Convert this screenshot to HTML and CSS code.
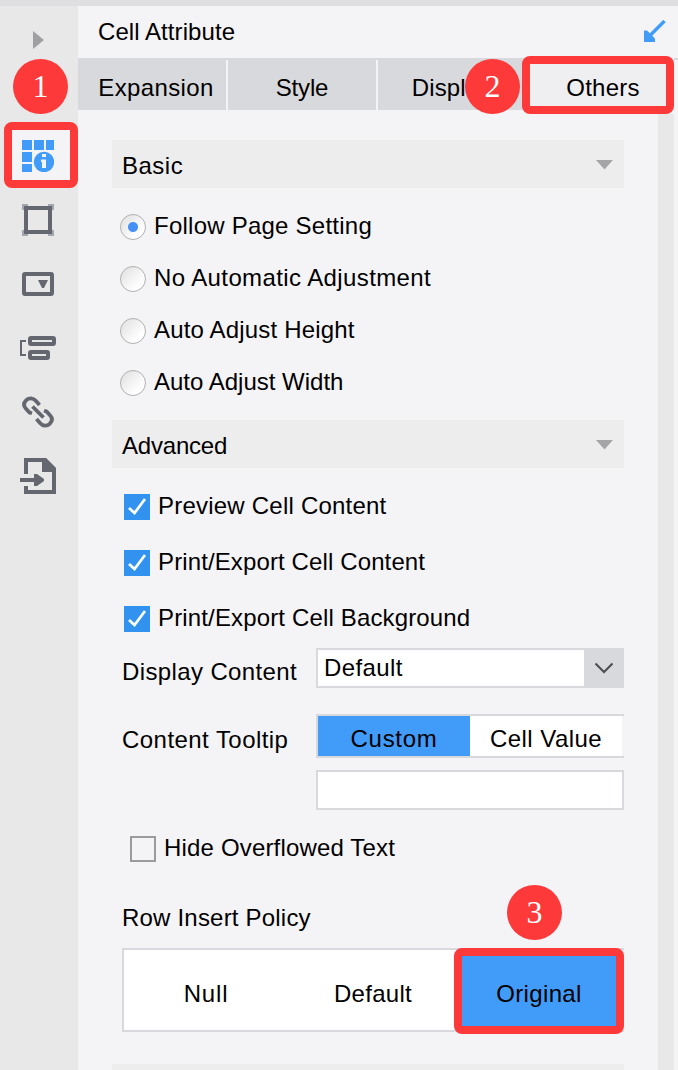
FILE: index.html
```html
<!DOCTYPE html>
<html lang="en">
<head>
<meta charset="utf-8">
<title>Cell Attribute</title>
<link rel="stylesheet" href="styles.css">
</head>
<body>
<div class="app">
  <nav class="rail">
    <svg class="collapse" width="12" height="18" viewBox="0 0 12 18"><path d="M0 0L11 9L0 18Z" fill="#a0a0a2"/></svg>
    <div class="tool tool-active">
      <svg width="32" height="32" viewBox="0 0 32 32" fill="#419bf9"><path d="M0 0h10v10H0zM12 0h10v10H12zM24 0h8v10h-8zM0 12h10v10H0zM0 24h10v8H0z"/><circle cx="22" cy="22" r="10.2"/><path d="M20 14h4v3h-4zM19 19.500H24V28h-4v-6h-1z" fill="#f4f4f7"/></svg>
      <span class="mark mark-tool"></span>
    </div>
    <div class="tool"><svg width="36" height="36" viewBox="0 0 36 36"><path d="M2 2h6v6H2zM28 2h6v6h-6zM2 28h6v6H2zM28 28h6v6h-6z" fill="#a5a6ab"/><path d="M6 6H30V30H6Z" fill="none" stroke="#646670" stroke-width="4"/><path d="M8 8h20v20H8z" fill="#e8e8e8"/></svg></div>
    <div class="tool"><svg width="36" height="36" viewBox="0 0 36 36"><rect x="4" y="8" width="28" height="20" rx="1" fill="none" stroke="#646670" stroke-width="4"/><path d="M18 14h10l-4 8h-2z" fill="#646670"/></svg></div>
    <div class="tool"><svg width="36" height="36" viewBox="0 0 36 36" fill="none" stroke="#646670"><path d="M6 11H1V25H6" stroke-width="2"/><rect x="10" y="8" width="24" height="6" rx="1" stroke-width="4"/><rect x="10" y="22" width="18" height="6" rx="1" stroke-width="4"/></svg></div>
    <div class="tool"><svg width="36" height="36" viewBox="0 0 36 36" fill="none" stroke="#646670" stroke-width="3.800"><path d="M19.500 11L16 7C13 3.600 9 3.600 6.300 6.200S3.400 12 6 14.800L9.500 18.500L12 19.300"/><path d="M16.500 25L20 29C23 32.400 27 32.400 29.700 29.800S32.600 24 30 21.200L26.500 17.500L24 16.700"/><path d="M12.500 12.500L23.500 23.500"/></svg></div>
    <div class="tool"><svg width="36" height="36" viewBox="0 0 36 36"><path d="M6 16V2H25L34 11V34H6V28" fill="none" stroke="#646670" stroke-width="4"/><path d="M22 0h4l10 10v4H22zM0 20h14v-4h3l7 5v2l-7 5h-3v-4H0z" fill="#646670"/></svg></div>
    <span class="badge badge-one">1</span>
  </nav>
  <main class="panel">
    <header class="title"><span class="t-title">Cell Attribute</span>
      <svg width="22" height="22" viewBox="0 0 22 22"><path d="M20.500 1L4 17.500" stroke="#419bf9" stroke-width="3.400"/><path d="M0 10.500l3 0 8 8v3.500H0z" fill="#419bf9"/></svg>
    </header>
    <div class="tabs">
      <div class="tab"><span class="t-expansion">Expansion</span></div>
      <div class="tab"><span class="t-style">Style</span></div>
      <div class="tab"><span class="t-display">Display</span><span class="badge badge-two">2</span></div>
      <div class="tab tab-active"><span class="t-others">Others</span><span class="mark mark-tab"></span></div>
    </div>
    <div class="body">
      <div class="form">
        <div class="section"><span class="t-basic">Basic</span><svg width="18" height="10" viewBox="0 0 18 10"><path d="M0 0H17L8.500 9.500Z" fill="#a5a5a7"/></svg></div>
        <div class="radios">
          <div class="radio"><i class="dot dot-on"></i><span class="t-follow">Follow Page Setting</span></div>
          <div class="radio"><i class="dot"></i><span class="t-noauto">No Automatic Adjustment</span></div>
          <div class="radio"><i class="dot"></i><span class="t-height">Auto Adjust Height</span></div>
          <div class="radio"><i class="dot"></i><span class="t-width">Auto Adjust Width</span></div>
        </div>
        <div class="section"><span class="t-advanced">Advanced</span><svg width="18" height="10" viewBox="0 0 18 10"><path d="M0 0H17L8.500 9.500Z" fill="#a5a5a7"/></svg></div>
        <div class="checks">
          <div class="check"><svg class="box" width="26" height="26" viewBox="0 0 26 26"><path d="M5 14l5.500 5L21 5" fill="none" stroke="#fff" stroke-width="2.700"/></svg><span class="t-preview">Preview Cell Content</span></div>
          <div class="check"><svg class="box" width="26" height="26" viewBox="0 0 26 26"><path d="M5 14l5.500 5L21 5" fill="none" stroke="#fff" stroke-width="2.700"/></svg><span class="t-print">Print/Export Cell Content</span></div>
          <div class="check"><svg class="box" width="26" height="26" viewBox="0 0 26 26"><path d="M5 14l5.500 5L21 5" fill="none" stroke="#fff" stroke-width="2.700"/></svg><span class="t-background">Print/Export Cell Background</span></div>
        </div>
        <div class="field"><label class="t-dispcontent">Display Content</label>
          <div class="select"><span class="t-default">Default</span><div class="arrow"><svg width="20" height="12" viewBox="0 0 20 12"><path d="M2.500 1.500L11 10L19.500 1.500" fill="none" stroke="#4c4d53" stroke-width="2"/></svg></div></div>
        </div>
        <div class="field field-tooltip"><label class="t-tooltip">Content Tooltip</label>
          <div class="segment"><div class="seg seg-on"><span class="t-custom">Custom</span></div><div class="seg"><span class="t-value">Cell Value</span></div></div>
        </div>
        <div class="input"></div>
        <div class="check check-hide"><i class="box-empty"></i><span class="t-hide">Hide Overflowed Text</span></div>
        <div class="policy-label"><span class="t-policy">Row Insert Policy</span><span class="badge badge-three">3</span></div>
        <div class="policy">
          <div class="choice"><span class="t-null">Null</span></div>
          <div class="choice"><span class="t-pdefault">Default</span></div>
          <div class="choice choice-on"><span class="t-original">Original</span></div>
        </div>
        <div class="section section-next"></div>
      </div>
      <div class="scroll"></div>
    </div>
  </main>
</div>
</body>
</html>
```
FILE: styles.css
```css
* { box-sizing: border-box; }
body { margin: 0; background: #f4f4f7; font: 24px/28px "Liberation Sans", Arial, sans-serif; color: #000; }
span, label { white-space: nowrap; }
svg { display: block; flex: none; }
.app { display: flex; width: 678px; height: 1070px; border-top: 6px solid #dfdfe1; overflow: hidden; }
.rail { position: relative; width: 78px; flex: none; background: #e8e8e8; display: flex; flex-direction: column; align-items: center; padding-top: 25px; }
.collapse { margin-bottom: 75px; }
.tool { position: relative; width: 100%; height: 64px; display: flex; align-items: center; justify-content: center; padding-right: 2px; }
.tool-active::before { content: ""; position: absolute; left: 4px; right: 0; top: 0; bottom: 0; background: #f4f4f7; border-radius: 8px; }
.tool-active svg { position: relative; }
.mark { position: absolute; border: 8px solid #fd3939; border-radius: 8px; z-index: 2; }
.mark-tool { left: 4px; top: -2px; width: 74px; height: 66px; }
.mark-tab { left: -6px; top: -2px; width: 152px; height: 58px; }
.badge { position: absolute; width: 55px; height: 55px; border-radius: 50%; background: #fd3939; color: #fff; font: 32px/54px "Liberation Serif", "Times New Roman", serif; text-align: center; z-index: 3; }
.badge-one { left: 13px; top: 53px; }
.badge-two { left: 87px; top: 1px; }
.badge-three { left: 395px; top: -19px; }
.panel { flex: 1; display: flex; flex-direction: column; }
.title { height: 52px; flex: none; display: flex; align-items: center; justify-content: space-between; padding: 0 12px 0 20px; }
.title svg { margin-bottom: 2px; }
.tabs { height: 52px; flex: none; display: grid; grid-template-columns: 148px 148px 148px 150px; column-gap: 2px; background: linear-gradient(#d8d9dc 2px, #f4f4f7 2px); }
.tab { position: relative; display: flex; align-items: center; justify-content: center; padding-top: 7px; background: #d8d9dc; }
.tab-active { width: 146px; background: #efeff1; padding-left: 4px; }
.tab:nth-child(3) { box-shadow: 2px 0 #d8d9dc; }
.body { flex: 1; display: flex; justify-content: space-between; padding: 0 4px 0 34px; }
.form { width: 512px; padding-top: 30px; }
.scroll { width: 16px; margin-top: 4px; background: #e8e8e8; }
.section { height: 48px; background: #ededed; display: flex; align-items: center; justify-content: space-between; padding: 3px 10px 0; }
.section svg { margin-bottom: 2px; }
.radios { padding: 13px 0 11px 8px; }
.radio { height: 52px; display: flex; align-items: center; gap: 8px; }
.radio span { padding-bottom: 3px; }
.dot { width: 26px; height: 26px; flex: none; border: 1.5px solid #b1b1b3; border-radius: 50%; background: linear-gradient(135deg, #dfdfe0, #fff 75%); }
.dot-on { background: radial-gradient(circle, #4490f4 0 4.5px, #0000 5.5px), linear-gradient(135deg, #dfdfe0, #fff 75%); }
.checks { padding: 11px 0 1px 12px; }
.check { height: 56px; display: flex; align-items: center; gap: 8px; }
.check span { padding-bottom: 3px; }
.box { background: #3193ef; }
.field { height: 40px; display: flex; justify-content: space-between; align-items: center; padding-left: 10px; }
.field label { padding-top: 7px; }
.select { width: 308px; height: 40px; display: flex; justify-content: space-between; border: 2px solid #d8d9dc; background: #fff; }
.select > span { padding: 4px 6px; }
.arrow { width: 38px; background: #d8d9dc; display: flex; align-items: center; justify-content: center; }
.field-tooltip { height: 44px; margin-top: 26px; }
.segment { width: 308px; height: 44px; display: flex; border: solid #d8d9dc; border-width: 2px 0 2px 2px; }
.seg { width: 152px; background: #fff; display: flex; align-items: center; justify-content: center; padding-top: 6px; }
.seg-on { background: #419bf9; }
.input { width: 308px; height: 40px; margin: 12px 0 0 204px; background: #fff; border: 2px solid #d8d9dc; }
.check-hide { margin-top: 11px; padding-left: 18px; }
.box-empty { width: 26px; height: 26px; border: 2px solid #9b9b9d; }
.policy-label { position: relative; height: 44px; margin-top: 27px; padding-left: 10px; }
.policy { width: 502px; height: 84px; margin-left: 10px; border: solid #d8d9dc; border-width: 2px 0 2px 2px; display: flex; }
.choice { width: 166px; background: #fff; display: flex; align-items: center; justify-content: center; padding-top: 8px; }
.choice-on { width: 170px; height: 86px; margin: -2px 0 0 -2px; flex: none; background: #419bf9; border: 8px solid #fd3939; border-radius: 8px; padding-top: 5px; }
.section-next { margin-top: 32px; }
.t-title { letter-spacing: .07px; }
.t-expansion { letter-spacing: .38px; margin-left: 8px; }
.t-style { letter-spacing: -.2px; }
.t-display { letter-spacing: .1px; margin-right: 1px; }
.t-others { letter-spacing: .25px; }
.t-basic { letter-spacing: .5px; }
.t-advanced { letter-spacing: -.2px; }
.t-follow { letter-spacing: .24px; }
.t-noauto { letter-spacing: .39px; }
.t-height { letter-spacing: .18px; }
.t-width { letter-spacing: 0; }
.t-preview { letter-spacing: .22px; }
.t-print { letter-spacing: .12px; }
.t-background { letter-spacing: .15px; }
.t-dispcontent { letter-spacing: .38px; }
.t-tooltip { letter-spacing: .45px; }
.t-default { letter-spacing: .4px; }
.t-custom { letter-spacing: .7px; }
.t-value { letter-spacing: .45px; }
.t-hide { letter-spacing: .17px; }
.t-policy { letter-spacing: .2px; }
.t-null { letter-spacing: .8px; margin-right: 2px; }
.t-pdefault { letter-spacing: .3px; }
.t-original { letter-spacing: .35px; }
```
